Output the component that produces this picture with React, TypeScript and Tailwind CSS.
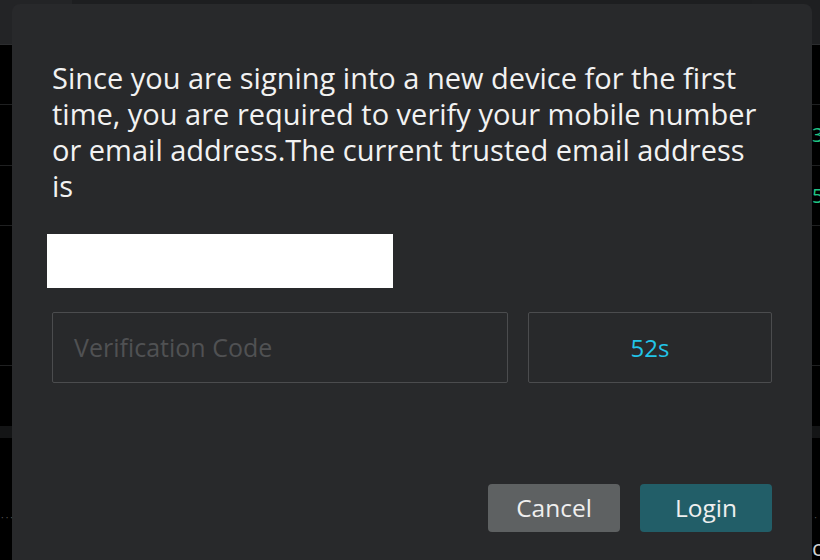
import React from "react";

export default function App() {
  const font = { fontFamily: '"Open Sans", "Noto Sans", sans-serif' };
  return (
    <div className="relative w-[820px] h-[560px] overflow-hidden bg-black" style={font}>
      {/* background page */}
      <div className="flex h-[45px] bg-[#222325] border-b border-[#2c2d2f]">
        <div className="w-[72px] h-full bg-[#232426]" />
        <div className="flex-1 flex flex-col">
          <div className="h-[4px] bg-[#1d1e20]" />
          <div className="flex-1 bg-[#222325]" />
        </div>
        <div className="w-[68px] h-full bg-[#1e1f21]" />
      </div>
      <div className="flex flex-col">
        <div className="h-[60px] border-b border-[#1f2021]" />
        <div className="h-[61px] border-b border-[#1f2021] flex justify-end items-center">
          <span className="w-[8px] text-[20px] leading-none text-[#20c384] overflow-hidden">3</span>
        </div>
        <div className="h-[60px] border-b border-[#1f2021] flex justify-end items-center">
          <span className="w-[8px] text-[20px] leading-none text-[#20c384] overflow-hidden">5</span>
        </div>
        <div className="h-[140px] border-b border-[#1f2021]" />
        <div className="h-[60px]" />
        <div className="h-[12px] bg-[#141516]" />
        <div className="h-[74px]" />
        <div className="h-[10px] flex items-center justify-between px-[1px]">
          <span className="text-[#555] text-[10px] leading-none tracking-[2px]">···</span>
          <span className="text-[#555] text-[10px] leading-none tracking-[2px]">··</span>
        </div>
        <div className="h-[14px]" />
        <div className="flex justify-end">
          <span className="w-[8px] text-[22px] leading-none text-[#cfcfcf] overflow-hidden">c</span>
        </div>
      </div>

      {/* modal */}
      <div className="absolute left-[12px] top-[4px] w-[800px] h-[620px] rounded-[8px] bg-[#28292b] px-[40px] pt-[56px]">
        <p className="w-[740px] text-[29px] leading-[36px] text-[#f2f2f2]">
          Since you are signing into a new device for the first
          <br />
          time, you are required to verify your mobile number
          <br />
          or email address.The current trusted email address
          <br />
          is
        </p>
        <div className="ml-[-5px] mt-[30px] w-[346px] h-[54px] bg-white" />
        <div className="mt-[24px] flex gap-[20px]">
          <div className="w-[456px] h-[71px] border border-[#4b4c4e] rounded-[2px] flex items-center pl-[21px]">
            <span className="text-[25px] text-[#505153]">Verification Code</span>
          </div>
          <div className="w-[244px] h-[71px] border border-[#4b4c4e] rounded-[2px] flex items-center justify-center">
            <span className="text-[24px] text-[#22c4e8]">52s</span>
          </div>
        </div>
        <div className="mt-[101px] flex justify-end gap-[20px]">
          <button className="w-[132px] h-[48px] rounded-[4px] bg-[#5e6162] text-[24.5px] text-[#efefef]">Cancel</button>
          <button className="w-[132px] h-[48px] rounded-[4px] bg-[#225e68] text-[24.5px] text-[#efefef]">Login</button>
        </div>
      </div>
    </div>
  );
}
